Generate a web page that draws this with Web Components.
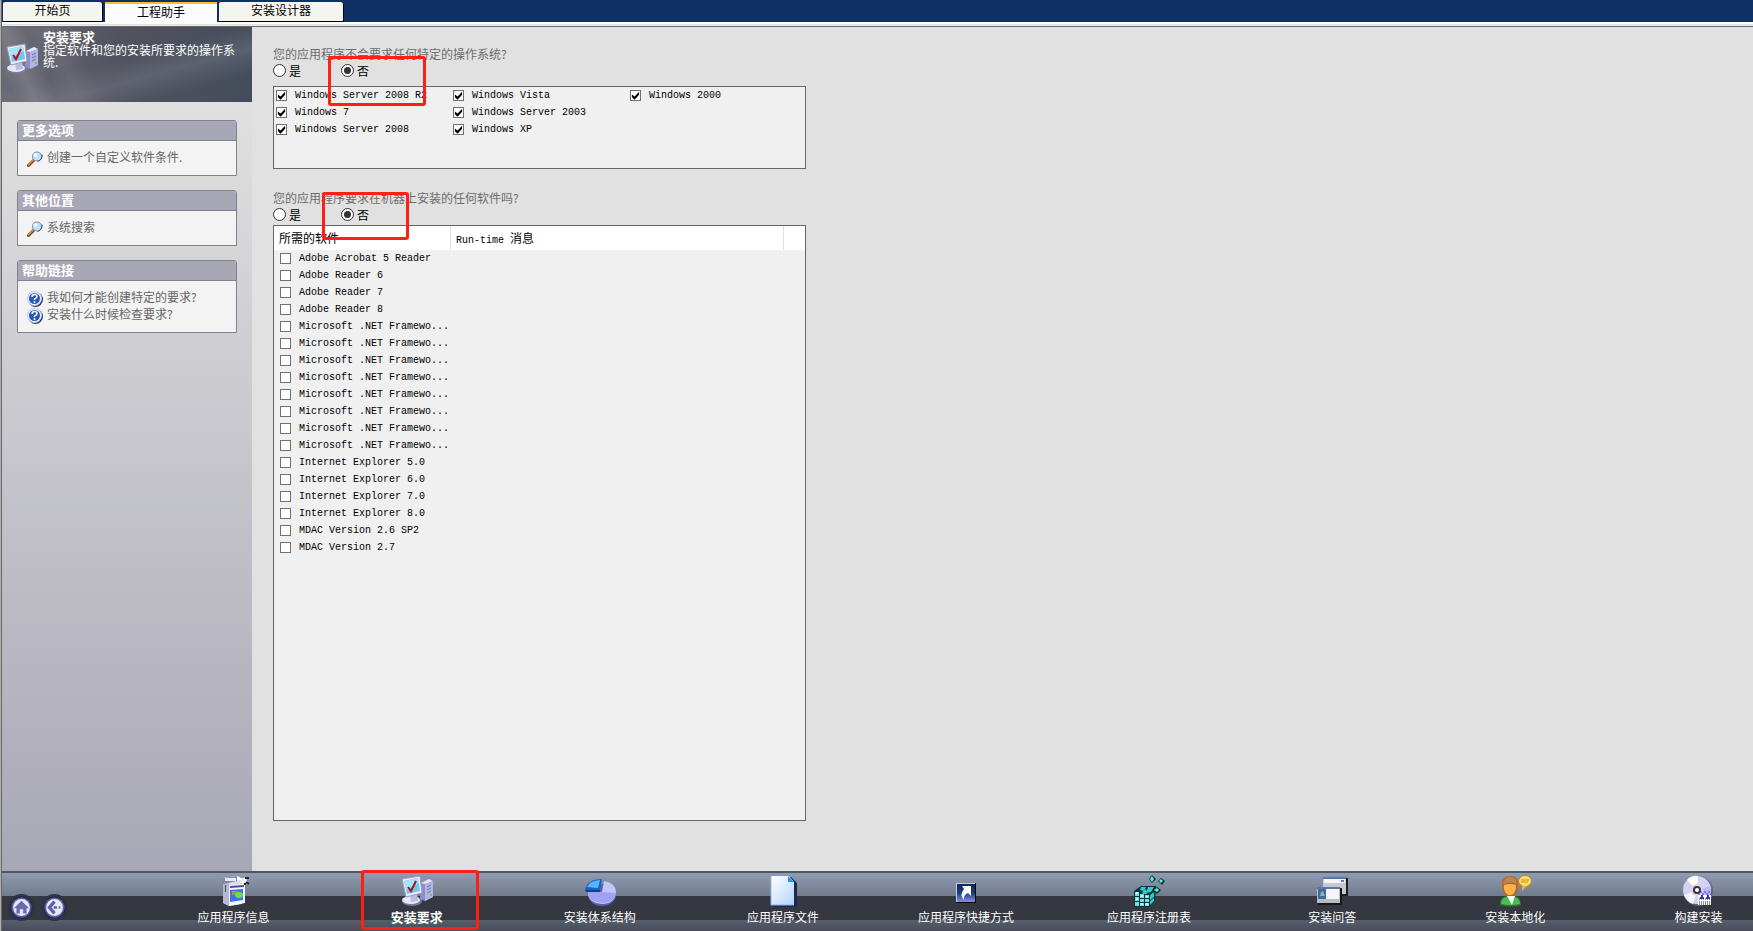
<!DOCTYPE html>
<html lang="zh-CN">
<head>
<meta charset="utf-8">
<title>工程助手</title>
<style>
html, body { margin: 0; }
body { font: 12px/16px "Noto Sans CJK SC", "Liberation Sans", sans-serif; color: #000; }
</style>
</head>
<body>
<project-assistant></project-assistant>
<script>
const define = (name, css, html, setup) => {
  const template = document.createElement('template');
  template.innerHTML = `<style>*{box-sizing:border-box}${css}</style>${html}`;
  customElements.define(name, class extends HTMLElement {
    static observedAttributes = ['name', 'icon'];
    constructor() {
      super();
      this.attachShadow({ mode: 'open' }).append(template.content.cloneNode(true));
    }
    connectedCallback() { if (setup) setup(this, this.shadowRoot); }
    attributeChangedCallback() { if (setup) setup(this, this.shadowRoot); }
  });
};

const icons = {
  computer: `<path d="M20 8l8-4 4 2v16l-8 4-5-2z" fill="#8f8fc8"/><path d="M20 8l8-4 4 2-8 3z" fill="#e4e6f8"/><path d="M24 9l8-3v16l-8 4z" fill="#b2b4e4"/><path d="M26 12l4-2M26 15l4-2M26 18l4-2" stroke="#7174a8"/><circle cx="30" cy="20" r="1" fill="#4c4"/><ellipse cx="11" cy="26" rx="10" ry="5" fill="#777d9c"/><ellipse cx="10" cy="25" rx="9" ry="4" fill="#e6e6f6"/><path d="M9 19h7l1 7-7 1z" fill="#b9bbe0"/><path d="M1 4l18-3 2 17L5 22z" fill="#ececf4" stroke="#9a9eb4"/><path d="M3 6l14-3 2 13L6 19z" fill="#6cc6f6"/><path d="M3 6l14-3 1 5L5 15z" fill="#a4e2fd"/><path d="M7 12l3 4 5-10" fill="none" stroke="#b01010" stroke-width="2"/>`,
  search: `<path d="M13 19L3 29" stroke="#494957" stroke-width="6" stroke-linecap="round"/><path d="M12 18L3 27" stroke="#e68422" stroke-width="4" stroke-linecap="round"/><circle cx="20" cy="11" r="10" fill="#8090ac"/><circle cx="20" cy="11" r="8" fill="#b4e4fa"/><circle cx="17" cy="8" r="4" fill="#effbff"/><path d="M30 7q2 10-9 14" fill="none" stroke="#445" stroke-width="2"/>`,
  help: `<circle cx="17" cy="17" r="15" fill="#32365c"/><circle cx="15" cy="15" r="15" fill="#c4cce0"/><circle cx="15" cy="15" r="13" fill="#f4f8ff"/><circle cx="15" cy="15" r="11" fill="#2456c8"/><path d="M10 12q0-5 5-5t5 4q0 3-5 5v2M15 20v4" fill="none" stroke="#fff" stroke-width="3"/>`,
  box: `<path d="M5 3l14-2 6 3-1 25-13 2-6-3z" fill="#d8dbf2"/><path d="M5 3l6 3v25l-6-4z" fill="#b4b6d2"/><path d="M5 3l14-2 6 3-14 3z" fill="#fff"/><path d="M5 3l14-2v5l-14 3z" fill="#85879c"/><path d="M7 3h11v3H7z" fill="#e9eaf8"/><path d="M11 10l16-1v19l-16 3z" fill="#f6f6ff"/><path d="M7 10h1v7H7z" fill="#4c5068"/><path d="M12 11l14-1v2l-14 1z" fill="#3d51a6"/><path d="M12 15l13-1v11l-13 2z" fill="#466dea"/><path d="M14 16h6v4h-6z" fill="#9d9a45"/><ellipse cx="21" cy="20" rx="4" ry="3" fill="#5de05a"/><path d="M23 4l5-2 1 5-4 2-3-2z" fill="#f5f5f7"/><path d="M27 3l4 0M28 7l3 2M26 9h2" stroke="#24252b" stroke-width="2"/>`,
  pie: `<ellipse cx="18" cy="20" rx="14" ry="11" fill="#5c5fb4"/><path d="M18 17L20 6q12 2 12 12-2 11-14 11Q4 28 4 17z" fill="#c3c6fb"/><path d="M4 17h14l14 1q-2 10-14 10Q5 27 4 17z" fill="#9fa2f0"/><path d="M16 15L18 4Q3 4 1 15z" fill="#1d5fc2"/><path d="M14 13l2-8Q5 6 3 12z" fill="#55b5fa"/><path d="M1 15h15v2H2z" fill="#123f8a"/>`,
  file: `<path d="M6 2h18l6 6v24H6z" fill="#192a4c"/><path d="M4 1h18l5 6v23H4z" fill="url(#paper)"/><path d="M21 1l6 6h-6z" fill="#2196e6"/><path d="M4 1v29h23" fill="none" stroke="#90b8ea"/><defs><linearGradient id="paper" x2="1" y2="1"><stop stop-color="#fff"/><stop offset="1" stop-color="#b4d3fc"/></linearGradient></defs>`,
  shortcut: `<path d="M6 8h20v20H6z" fill="#000"/><path d="M6 8h19v19H6z" fill="#c8ccd8"/><path d="M7 9h18v18H7z" fill="url(#sky)"/><path d="M12 11h9v10l-3-3q-5 2-4 7-5-5 0-11z" fill="#fff"/><defs><linearGradient id="sky" x2="0" y2="1"><stop stop-color="#082a62"/><stop offset=".5" stop-color="#163e80"/><stop offset="1" stop-color="#8e8df0"/></linearGradient></defs>`,
  registry: `<path d="M1 16l7-5h15l-1 14-6 7H1z" fill="#00383c"/><path d="M2 17h4v4H2zM7 19h4v4H7zM12 20h4v3h-4zM2 22h4v4H2zM7 24h4v3H7zM12 24h4v3h-4zM2 27h4v4H2zM7 28h4v3H7zM12 28h4v3h-4z" fill="#74dede"/><path d="M3 17h2v2H3zM8 20h2v2H8zM3 23h2v2H3zM8 28h2v2H8zM13 28h2v2h-2zM13 21h2v1h-2z" fill="#dff"/><path d="M8 12h5l-2 4-4-1zM15 12h6l-3 5-5 1zM9 17l4-3 1 5h-4zM17 20l4-3v5l-4 3zM17 26l4-3v3l-4 4z" fill="#3ac7c9"/><path d="M16 4l3-4 4 4-4 4zM25 6l3-3 4 3-3 4zM20 15l4-3 4 3-4 4z" fill="#003338"/><path d="M17 4l2-3 2 3-2 3zM26 6l2-2 2 2-2 2zM21 15l3-2 2 2-2 2z" fill="#62e9ea"/>`,
  windows: `<path d="M8 3h24v18H8z" fill="#1d1d22"/><path d="M7 2h23v17H7z" fill="#c8c8cc"/><path d="M7 2h23v2H7z" fill="#5a75ae"/><path d="M8 4h21v4H8z" fill="#f4f4f7"/><path d="M25 5h3v2h-3z" fill="#6484b8"/><path d="M2 13h24v17H2z" fill="#17171c"/><path d="M1 12h23v16H1z" fill="#bdbdc1"/><path d="M1 12h23v2H1z" fill="#5a75ae"/><path d="M2 14h8v10H2z" fill="#3e6a98"/><path d="M10 14h13v10H10z" fill="#f5f5fa"/><path d="M4 21l1-4 2-1 2 5z" fill="#91abc5"/>`,
  person: `<path d="M1 30q0-9 7-9h8q6 1 6 9-10 3-21 0z" fill="#247b2d"/><path d="M2 29q0-7 7-7h6q6 1 6 7-9 2-19 0z" fill="#4ebb51"/><path d="M8 21h8l-3 9z" fill="#f7fbff"/><path d="M3 9q0-8 8-8t8 8q0 11-6 12h-4q-6-2-6-12" fill="#bd6516"/><path d="M5 10q5-2 12 0 0 9-5 10h-3q-5-3-4-10" fill="#ffb14c"/><path d="M4 9q1-7 7-7t7 7q-6-3-14 0" fill="#b5885c"/><ellipse cx="26" cy="6" rx="7" ry="6" fill="#bc8a17"/><path d="M23 9v7l6-6z" fill="#edb22c"/><ellipse cx="26" cy="6" rx="6" ry="5" fill="#ffdc6e"/><path d="M22 5h8M22 7h7" stroke="#d18b19"/>`,
  disc: `<circle cx="16" cy="16" r="15" fill="#646480"/><circle cx="15" cy="15" r="14" fill="#d3d3f3"/><path d="M15 15L5 5Q10 0 16 1z" fill="#fff"/><path d="M15 15l14-4q1 8-4 13z" fill="#b8bafa"/><path d="M15 15L2 20q3 7 9 9z" fill="#f5f4ff"/><circle cx="15" cy="15" r="6" fill="#e8cbed"/><circle cx="15" cy="15" r="4" fill="#34343c"/><circle cx="15" cy="15" r="2" fill="#fff"/><path d="M16 20h13v10H16z" fill="#fff"/><path d="M17 27h12M17 29h12M17 24h12" stroke="#222" stroke-dasharray="1 1"/><path d="M16 19h13M18 17h10" stroke="#3b3bc0" stroke-dasharray="2 2"/><path d="M20 20v4M18 23h4M26 20v4M24 23h4" stroke="#2f35c9" stroke-width="2"/>`,
  home: `<circle cx="16" cy="16" r="16" fill="#30353e"/><circle cx="16" cy="16" r="13" fill="#202456"/><circle cx="16" cy="16" r="12" fill="#5a5aa8"/><circle cx="16" cy="16" r="10" fill="#e8e8ee"/><path d="M7 17l9-9 9 9h-3v6h-4v-5h-4v5h-4v-6z" fill="#6969ac"/>`,
  back: `<circle cx="16" cy="16" r="16" fill="#30353e"/><circle cx="16" cy="16" r="13" fill="#202456"/><circle cx="16" cy="16" r="12" fill="#5a5aa8"/><circle cx="16" cy="16" r="10" fill="#e8e8ee"/><path d="M16 9l-6 7 6 7" fill="none" stroke="#6161a8" stroke-width="4"/><path d="M15 16h4M21 16h2" stroke="#6161a8" stroke-width="3"/>`
};

define('app-icon', `:host{display:block;width:32px;height:32px;flex:none}svg{display:block;width:100%;height:100%}`,
  `<svg viewBox="0 0 32 32" aria-hidden="true"></svg>`,
  (el, root) => { root.querySelector('svg').innerHTML = icons[el.getAttribute('name')] || ''; });

define('highlight-frame', `:host{display:block;position:absolute;z-index:2;border:3px solid #ff1f14;border-radius:3px;pointer-events:none;box-sizing:border-box}`, ``);

define('page-tab', `
  :host{display:block;height:20px}
  button{display:block;width:100%;height:20px;padding:0 0 3px;border:0;border-bottom:1px solid #000;border-right:1px solid #000;border-radius:2px 3px 0 0;background:#f5f5f0;font:inherit;line-height:16px;color:#000}
  :host([active]) button{border:0;border-top:2px solid #fbc02d;border-radius:0;padding-bottom:4px;background:#fcfcfe}`,
  `<button type="button" role="tab"><slot></slot></button>`);

define('tab-bar', `
  :host{display:block;background:#0f3064}
  nav{display:grid;grid-template-columns:100px 112px 125px;column-gap:2px;padding:2px 0 0 1px}
  .strip{height:5px;background:linear-gradient(#fcfcfe 2px,#d8d8dc 2px,#f4f4f4 4px,#666 4px)}`,
  `<nav role="tablist"><slot></slot></nav><div class="strip"></div>`);

define('side-group', `
  :host{display:block;border:1px solid #80808e;border-radius:3px 3px 0 0;background:#f3f3f3;overflow:hidden}
  h2{margin:0;height:20px;padding:0 4px;background:#a8a7b5;border-bottom:1px solid #80808e;font-size:13px;line-height:18px;font-weight:700;color:#fff}
  div{padding:7px 9px 10px}`, `<h2></h2><div><slot></slot></div>`,
  (el, root) => { root.querySelector('h2').textContent = el.getAttribute('heading'); });

define('side-link', `
  :host{display:block}
  a{display:flex;gap:4px;align-items:center;height:17px;color:#666;text-decoration:none;white-space:nowrap}
  app-icon{width:16px;height:16px;margin-top:4px}`,
  `<a href="#"><app-icon></app-icon><slot></slot></a>`,
  (el, root) => root.querySelector('app-icon').setAttribute('name', el.getAttribute('icon')));

define('side-panel', `
  :host{display:block;background:linear-gradient(#e0e0e0 76px,#a8a7b5)}
  header{display:flex;gap:5px;height:75px;padding:3px 8px 0 4px;color:#fff;line-height:12px;
    background:linear-gradient(65deg,#0000 5%,#9a9aa455 12%,#0000 20%,#8a8a9433 28%,#0000 36%),linear-gradient(165deg,#0000 45%,#9095a544 62%,#0000 80%),linear-gradient(100deg,#6d6d78,#51535e 45%,#444c5b)}
  header app-icon{margin-top:13px}
  h1{margin:0;font-size:13px;line-height:14px}
  p{margin:0}
  .groups{display:grid;gap:14px;padding:18px 15px 0}`,
  `<header><app-icon name="computer"></app-icon><div><h1>安装要求</h1><p>指定软件和您的安装所要求的操作系统.</p></div></header>
  <div class="groups">
    <side-group heading="更多选项"><side-link icon="search">创建一个自定义软件条件.</side-link></side-group>
    <side-group heading="其他位置"><side-link icon="search">系统搜索</side-link></side-group>
    <side-group heading="帮助链接"><side-link icon="help">我如何才能创建特定的要求?</side-link><side-link icon="help">安装什么时候检查要求?</side-link></side-group>
  </div>`);

define('check-item', `
  :host{display:block}
  label{display:flex;align-items:center;gap:8px;height:17px;font:10px/17px "Liberation Mono",monospace;color:#000;white-space:nowrap}
  input{appearance:none;flex:none;width:11px;height:11px;margin:0;border:1px solid #707070;background:#fff}
  input:checked::before{content:"";display:block;width:9px;height:9px;background:#000;clip-path:polygon(10% 40%,40% 62%,90% 8%,90% 42%,40% 96%,10% 70%)}`,
  `<label><input type="checkbox"><span><slot></slot></span></label>`,
  (el, root) => { root.querySelector('input').checked = el.hasAttribute('checked'); });

define('yes-no', `
  :host{display:block}
  fieldset{margin:0;padding:0;border:0;min-width:0}
  legend{padding:0;height:15px;line-height:15px;color:#6c6c6c}
  .options{display:grid;grid-template-columns:68px 68px;padding-top:1px}
  label{display:flex;align-items:center;gap:3px;height:17px}
  input{appearance:none;width:13px;height:13px;margin:0;border:1px solid #333;border-radius:50%;background:#fff;display:grid;place-items:center}
  input:checked::before{content:"";width:7px;height:7px;border-radius:50%;background:#333}`,
  `<fieldset><legend><slot></slot></legend><div class="options"><label><input type="radio" name="answer">是</label><label><input type="radio" name="answer" checked>否</label></div></fieldset>`);

define('os-list', `
  :host{display:grid;grid-template:repeat(3,17px) / repeat(3,177px);grid-auto-flow:column;height:83px;padding:0 2px;border:1px solid #666;background:#f0f0f0;box-sizing:border-box}`,
  ['Windows Server 2008 R2','Windows 7','Windows Server 2008','Windows Vista','Windows Server 2003','Windows XP','Windows 2000'].map(t => `<check-item checked>${t}</check-item>`).join(''));

const software = ['Adobe Acrobat 5 Reader','Adobe Reader 6','Adobe Reader 7','Adobe Reader 8',
  ...Array(8).fill('Microsoft .NET Framewo...'),
  'Internet Explorer 5.0','Internet Explorer 6.0','Internet Explorer 7.0','Internet Explorer 8.0','MDAC Version 2.6 SP2','MDAC Version 2.7'];
define('software-list', `
  :host{display:block;border:1px solid #666;background:#f0f0f0;box-sizing:border-box}
  table{width:100%;border-collapse:separate;border-spacing:0;table-layout:fixed}
  th{height:24px;padding:0 5px;background:#fff;border-right:1px solid #e0e0e0;text-align:left;font-weight:400;line-height:22px}
  th:last-child{border:0}
  th span{font:10px "Liberation Mono",monospace}
  td{height:17px;padding:0 6px}`,
  `<table><colgroup><col style="width:177px"><col><col style="width:21px"></colgroup><thead><tr><th>所需的软件</th><th><span>Run-time </span>消息</th><th></th></tr></thead><tbody>${software.map(t => `<tr><td><check-item>${t}</check-item></td><td></td><td></td></tr>`).join('')}</tbody></table>`);

define('requirements-form', `
  :host{display:flex;flex-direction:column;background:#e1e1e1;padding:19px 21px 50px}
  section{position:relative;width:533px;max-width:100%}
  yes-no{padding-bottom:7px}
  .software{flex:1;display:flex;flex-direction:column;margin-top:21px}
  .software yes-no{padding-bottom:2px}
  software-list{flex:1}
  .os highlight-frame{left:55px;top:10px;width:98px;height:50px}
  .software highlight-frame{left:49px;top:2px;width:87px;height:48px}`,
  `<section class="os"><yes-no>您的应用程序不会要求任何特定的操作系统?</yes-no><os-list></os-list><highlight-frame></highlight-frame></section>
  <section class="software"><yes-no>您的应用程序要求在机器上安装的任何软件吗?</yes-no><software-list></software-list><highlight-frame></highlight-frame></section>`);

define('step-button', `
  :host{display:grid;justify-items:center;align-items:start;position:relative}
  button{display:grid;justify-items:center;padding:2px 0 0;border:0;background:none;font:inherit;line-height:16px;color:#fff;white-space:nowrap}
  app-icon{margin-bottom:2px}
  :host([active]) button{font-weight:700;font-size:13px}
  highlight-frame{display:none}
  :host([active]) highlight-frame{display:block;left:36px;top:-3px;width:118px;height:60px}`,
  `<button type="button"><app-icon></app-icon><slot></slot></button><highlight-frame></highlight-frame>`,
  (el, root) => root.querySelector('app-icon').setAttribute('name', el.getAttribute('icon')));

const steps = [['box','应用程序信息'],['computer','安装要求'],['pie','安装体系结构'],['file','应用程序文件'],['shortcut','应用程序快捷方式'],['registry','应用程序注册表'],['windows','安装问答'],['person','安装本地化'],['disc','构建安装']];
define('step-bar', `
  :host{display:flex;height:60px;border-top:2px solid #50565f;overflow-x:clip;box-sizing:border-box;
    background:linear-gradient(#8f9bb2,#727c8c 23px,#353840 23px,#353840 47px,#56606c 47px,#4a4a59)}
  .history{display:flex;gap:6px;flex:none;width:140px;padding:21px 0 0 6px}
  .history button{width:27px;height:27px;padding:0;border:0;background:none}
  .history app-icon{width:27px;height:27px}
  .steps{flex:1;display:grid;grid-template-columns:repeat(9,minmax(0,1fr));margin-right:-37px}`,
  `<div class="history"><button type="button" aria-label="主页"><app-icon name="home"></app-icon></button><button type="button" aria-label="后退"><app-icon name="back"></app-icon></button></div>
  <div class="steps">${steps.map(([i, t]) => `<step-button icon="${i}"${i === 'computer' ? ' active' : ''}>${t}</step-button>`).join('')}</div>`);

define('project-assistant', `
  :host{display:flex;flex-direction:column;min-height:100vh;box-sizing:border-box;border-left:1px solid #b0b0b0}
  .frame{flex:1;display:flex;flex-direction:column;border-left:1px solid #666}
  main{flex:1;display:grid;grid-template-columns:250px minmax(0,1fr)}`,
  `<div class="frame"><tab-bar><page-tab>开始页</page-tab><page-tab active>工程助手</page-tab><page-tab>安装设计器</page-tab></tab-bar>
  <main><side-panel></side-panel><requirements-form></requirements-form></main><step-bar></step-bar></div>`);
</script>
</body>
</html>
